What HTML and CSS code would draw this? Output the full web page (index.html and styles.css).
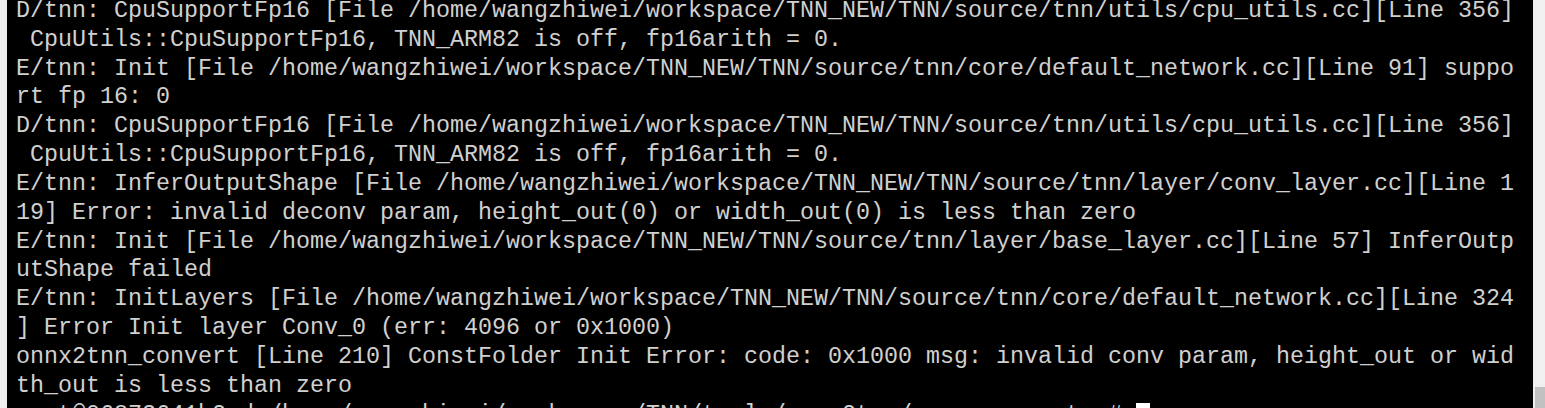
FILE: index.html
```html
<!DOCTYPE html>
<html>
<head>
<meta charset="utf-8">
<link rel="stylesheet" href="styles.css">
</head>
<body>
<div class="window">
  <div class="edge"></div>
  <div class="terminal">
    <div class="lines">
      <div class="line">D/tnn: CpuSupportFp16 [File /home/wangzhiwei/workspace/TNN_NEW/TNN/source/tnn/utils/cpu_utils.cc][Line 356]</div>
      <div class="line"> CpuUtils::CpuSupportFp16, TNN_ARM82 is off, fp16arith = 0.</div>
      <div class="line">E/tnn: Init [File /home/wangzhiwei/workspace/TNN_NEW/TNN/source/tnn/core/default_network.cc][Line 91] suppo</div>
      <div class="line">rt fp 16: 0</div>
      <div class="line">D/tnn: CpuSupportFp16 [File /home/wangzhiwei/workspace/TNN_NEW/TNN/source/tnn/utils/cpu_utils.cc][Line 356]</div>
      <div class="line"> CpuUtils::CpuSupportFp16, TNN_ARM82 is off, fp16arith = 0.</div>
      <div class="line">E/tnn: InferOutputShape [File /home/wangzhiwei/workspace/TNN_NEW/TNN/source/tnn/layer/conv_layer.cc][Line 1</div>
      <div class="line">19] Error: invalid deconv param, height_out(0) or width_out(0) is less than zero</div>
      <div class="line">E/tnn: Init [File /home/wangzhiwei/workspace/TNN_NEW/TNN/source/tnn/layer/base_layer.cc][Line 57] InferOutp</div>
      <div class="line">utShape failed</div>
      <div class="line">E/tnn: InitLayers [File /home/wangzhiwei/workspace/TNN_NEW/TNN/source/tnn/core/default_network.cc][Line 324</div>
      <div class="line">] Error Init layer Conv_0 (err: 4096 or 0x1000)</div>
      <div class="line">onnx2tnn_convert [Line 210] ConstFolder Init Error: code: 0x1000 msg: invalid conv param, height_out or wid</div>
      <div class="line">th_out is less than zero</div>
      <div class="line">root@06873641b2cd:/home/wangzhiwei/workspace/TNN/tools/onnx2tnn/onnx-converter# <span class="cursor"></span></div>
    </div>
  </div>
  <div class="scrollbar"><div class="thumb"></div></div>
</div>
</body>
</html>
```
FILE: styles.css
```css
html, body {
  margin: 0;
  padding: 0;
  width: 1545px;
  height: 408px;
  overflow: hidden;
  background: #f0f0f0;
}
.window {
  display: flex;
  height: 408px;
}
.edge {
  width: 7px;
  flex: none;
  background: #f0f0f0;
}
.terminal {
  flex: 1;
  background: #000;
  overflow: hidden;
  padding-left: 9px;
}
.lines {
  margin-top: -3px;
  font-family: "Courier New", "Nimbus Mono PS", "Nimbus Mono L", "FreeMono", "Liberation Mono", monospace;
  font-size: 23.33px;
  line-height: 28.83px;
  color: #d0d0d0;
}
.line {
  white-space: pre;
  height: 28.83px;
}
.cursor {
  display: inline-block;
  width: 14px;
  height: 26px;
  background: #ffffff;
  vertical-align: -8px;
}
.scrollbar {
  width: 12px;
  flex: none;
  background: #f0f0f0;
  display: flex;
  flex-direction: column;
  justify-content: flex-end;
  align-items: flex-end;
}
.thumb {
  width: 10px;
  height: 21px;
  background: #c1c1c1;
}
```
